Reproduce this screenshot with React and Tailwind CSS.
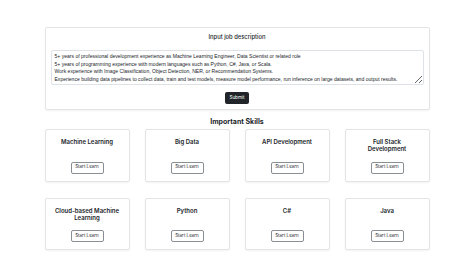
const JOB_TEXT = [
  "5+ years of professional development experience as Machine Learning Engineer, Data Scientist or related role",
  "5+ years of programming experience with modern languages such as Python, C#, Java, or Scala.",
  "Work experience with Image Classification, Object Detection, NER, or Recommendation Systems.",
  "Experience building data pipelines to collect data, train and test models, measure model performance, run inference on large datasets, and output results.",
].join("\n");

const SKILLS = [
  "Machine Learning",
  "Big Data",
  "API Development",
  "Full Stack Development",
  "Cloud-based Machine Learning",
  "Python",
  "C#",
  "Java",
];

function SkillCard({ name }) {
  return (
    <div className="flex h-[52.5px] flex-col items-center rounded-[2px] border border-[#e4e4e4] bg-white px-[9px] pt-[8px] pb-[7px] shadow-[0_1px_2px_rgba(0,0,0,0.05)]">
      <h3 className="text-center text-[6px] font-semibold leading-[7.4px] text-[#212529]">
        {name}
      </h3>
      <button className="mt-auto h-[12px] w-[33px] shrink-0 rounded-[2px] border border-[#8a8f94] bg-white text-[4.5px] leading-none text-[#212529]">
        Start Learn
      </button>
    </div>
  );
}

export default function App() {
  return (
    <div className="min-h-screen bg-white pt-[27px] font-['Inter',sans-serif] text-[#212529]">
      <div className="mx-auto w-[385px]">
        <div className="flex flex-col items-center rounded-[2px] border border-[#e4e4e4] bg-white px-[5px] pt-[5px] pb-[5px] shadow-[0_1px_2px_rgba(0,0,0,0.05)]">
          <h2 className="text-[5.8px] font-medium leading-[8px]">Input job description</h2>
          <textarea
            readOnly
            value={JOB_TEXT}
            className="mt-[9px] h-[35px] w-full resize-y overflow-hidden rounded-[2px] border border-[#dee2e6] px-[3px] pt-[2px] pb-0 font-['Liberation_Sans',sans-serif] text-[5.05px] leading-[7.6px] text-[#212529] outline-none"
          />
          <button className="mt-[7px] h-[12px] w-[24px] rounded-[2px] bg-[#212529] text-[4.6px] leading-none text-white">
            Submit
          </button>
        </div>

        <h2 className="mt-[7px] text-center text-[7px] font-bold leading-[10px]">Important Skills</h2>

        <div className="mt-[2px] grid grid-cols-4 gap-x-[15px] gap-y-[16px]">
          {SKILLS.map((s) => (
            <SkillCard key={s} name={s} />
          ))}
        </div>
      </div>
    </div>
  );
}
